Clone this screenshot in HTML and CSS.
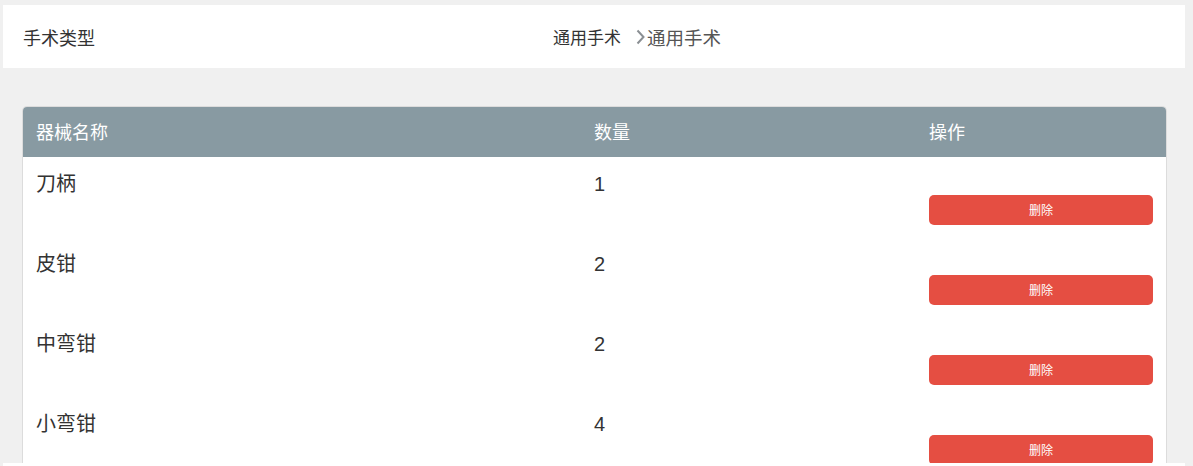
FILE: index.html
```html
<!DOCTYPE html>
<html lang="zh-CN">
<head>
<meta charset="utf-8">
<title>手术器械</title>
<link rel="stylesheet" href="styles.css">
</head>
<body>
<div class="topbar">
  <div class="label">手术类型</div>
  <div class="path">
    <span class="crumb">通用手术</span>
    <svg class="chev" width="11" height="18" viewBox="0 0 11 18"><path d="M2.5 2.5 L8.5 9 L2.5 15.5" fill="none" stroke="#8a8f93" stroke-width="2"/></svg>
    <span class="crumb2">通用手术</span>
  </div>
</div>

<div class="card">
  <div class="row head">
    <div class="c1">器械名称</div>
    <div class="c2">数量</div>
    <div class="c3">操作</div>
  </div>
  <div class="row">
    <div class="c1">刀柄</div>
    <div class="c2">1</div>
    <div class="c3"><button class="del">删除</button></div>
  </div>
  <div class="row">
    <div class="c1">皮钳</div>
    <div class="c2">2</div>
    <div class="c3"><button class="del">删除</button></div>
  </div>
  <div class="row">
    <div class="c1">中弯钳</div>
    <div class="c2">2</div>
    <div class="c3"><button class="del">删除</button></div>
  </div>
  <div class="row">
    <div class="c1">小弯钳</div>
    <div class="c2">4</div>
    <div class="c3"><button class="del">删除</button></div>
  </div>
</div>
<div class="footer"></div>
</body>
</html>
```
FILE: styles.css
```css
html, body {
  margin: 0;
  padding: 0;
  background: #f0f0f0;
  font-family: "Liberation Sans", "Noto Sans CJK SC", sans-serif;
  color: #333;
  overflow: hidden;
}
body {
  padding-top: 5px;
}
.topbar {
  margin: 0 8px 0 3px;
  height: 63px;
  background: #fff;
  display: flex;
  align-items: center;
}
.topbar .label {
  width: 530px;
  padding-left: 20px;
  font-size: 18px;
  color: #333;
}
.path {
  display: flex;
  align-items: center;
}
.crumb {
  font-size: 17px;
  color: #333;
}
.chev {
  margin-left: 14px;
  margin-right: 1px;
}
.crumb2 {
  font-size: 18.5px;
  color: #555;
}
.card {
  margin: 38px 0 0 22px;
  width: 1143px;
  background: #fff;
  border: 1px solid #dcdcdc;
  border-bottom: none;
  border-radius: 5px 5px 0 0;
  overflow: hidden;
}
.row {
  display: grid;
  grid-template-columns: 558px 335px 250px;
  height: 80px;
  font-size: 20px;
}
.row > div {
  padding: 14px 13px 0;
  line-height: 26px;
}
.row.head {
  height: 50px;
  background: #889aa2;
  color: #fff;
  font-size: 18px;
}
.row.head > div {
  padding-top: 13px;
}
.row .c3 {
  padding-top: 38px;
}
.del {
  display: block;
  width: 224px;
  height: 30px;
  border: none;
  border-radius: 5px;
  background: #e54e42;
  color: #fff;
  font-family: "Liberation Sans", "Noto Sans CJK SC", sans-serif;
  font-size: 12px;
  padding: 0 0 2px;
}
.footer {
  position: fixed;
  left: 3px;
  right: 8px;
  top: 463px;
  height: 10px;
  background: #fff;
}
```
